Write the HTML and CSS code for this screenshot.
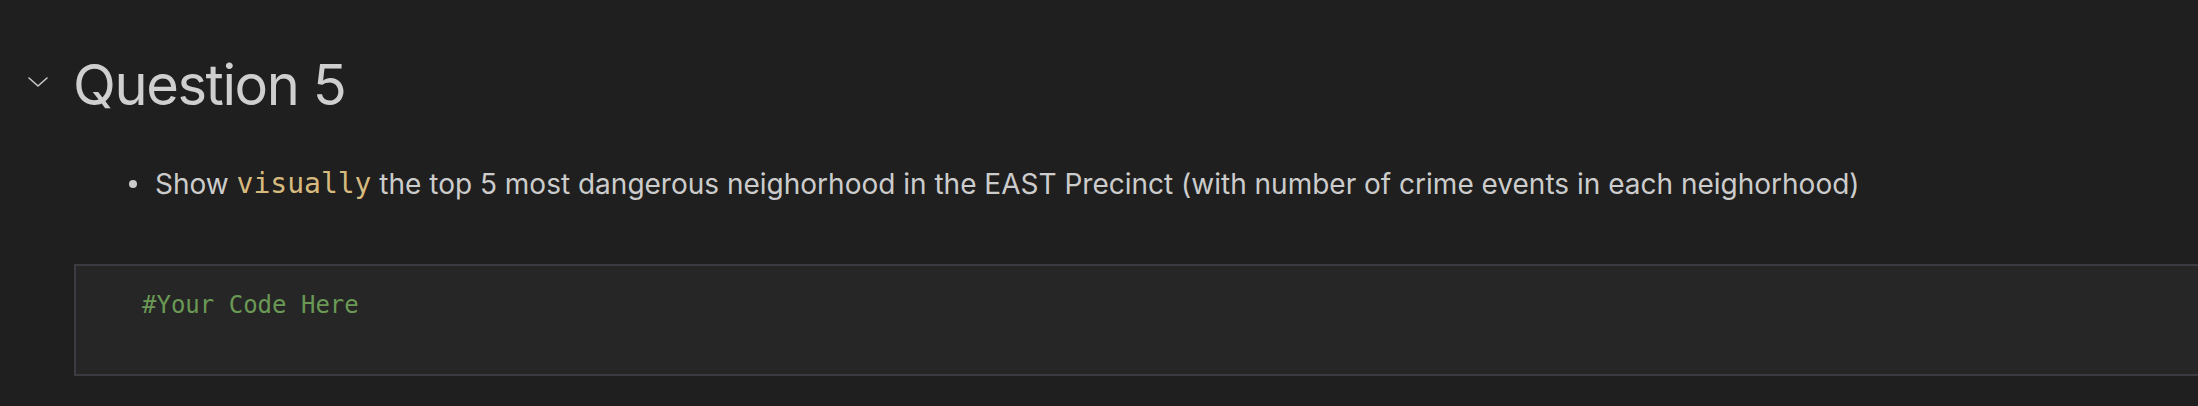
FILE: index.html
```html
<!DOCTYPE html>
<html>
<head>
<meta charset="utf-8">
<link rel="stylesheet" href="styles.css">
</head>
<body>
  <section class="md-cell">
    <div class="heading-row">
      <svg class="chevron" width="20" height="10" viewBox="0 0 20 10"><path d="M1 1 L10 9 L19 1" fill="none" stroke="#c8c8c8" stroke-width="1.6" stroke-linecap="round" stroke-linejoin="round"/></svg>
      <h1 class="title">Question 5</h1>
    </div>
    <ul class="bullets">
      <li class="bullet">Show <code class="inline-code">visually</code> the top 5 most dangerous neighorhood in the EAST Precinct (with number of crime events in each neighorhood)</li>
    </ul>
  </section>
  <section class="code-cell">
    <pre class="code">#Your Code Here</pre>
  </section>
</body>
</html>
```
FILE: styles.css
```css
html, body {
  margin: 0;
  padding: 0;
  background: #1f1f1f;
  width: 2198px;
  height: 406px;
  overflow: hidden;
}
body {
  font-family: Inter, "Liberation Sans", sans-serif;
  color: #cccccc;
}
.md-cell {
  padding-top: 51px;
}
.heading-row {
  display: flex;
  align-items: flex-start;
}
.chevron {
  margin-left: 28px;
  margin-top: 26px;
  flex: none;
}
.title {
  margin: 0 0 0 25px;
  font-size: 56px;
  line-height: 68px;
  font-weight: 400;
  letter-spacing: -1.4px;
  color: #cfcfcf;
}
.bullets {
  list-style: none;
  margin: 47px 0 0 0;
  padding: 0;
}
.bullet {
  display: flex;
  align-items: center;
  font-size: 28px;
  line-height: 36px;
  white-space: pre;
}
.bullet::before {
  content: "";
  width: 8px;
  height: 8px;
  border-radius: 50%;
  background: #cccccc;
  margin-left: 129px;
  margin-right: 18px;
  flex: none;
}
.inline-code {
  font-family: "DejaVu Sans Mono", monospace;
  font-size: 28px;
  color: #d7ba7d;
}
.code-cell {
  margin-top: 62px;
  margin-left: 74px;
  background: #262626;
  border: 2px solid #3b3b41;
  border-right: none;
  height: 108px;
  box-sizing: content-box;
}
.code {
  margin: 0;
  padding: 23px 0 0 66px;
  font-family: "DejaVu Sans Mono", monospace;
  font-size: 24px;
  line-height: 32px;
  color: #6a9955;
}
```
